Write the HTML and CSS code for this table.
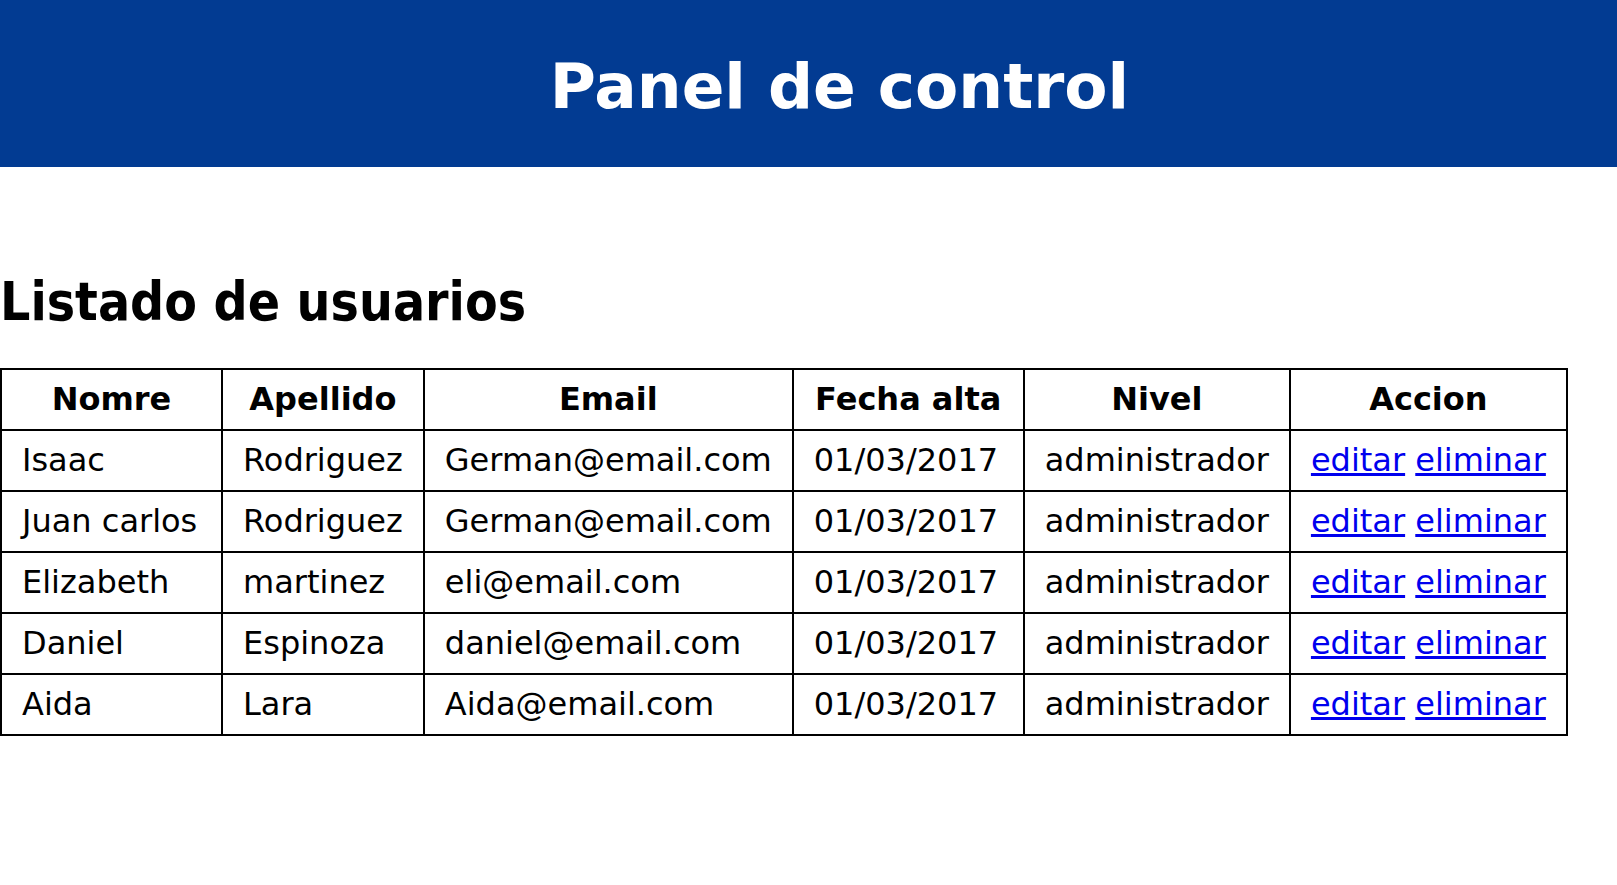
FILE: index.html
```html
<!DOCTYPE html>
<html lang="es">
<head>
<meta charset="utf-8">
<title>Panel de control</title>
<link rel="stylesheet" href="styles.css">
</head>
<body>
<header class="top-bar">
  <h1 class="top-title">Panel de control</h1>
</header>
<main class="content">
  <h2 class="section-title">Listado de usuarios</h2>
  <table class="users">
    <colgroup>
      <col class="c-nombre">
      <col class="c-apellido">
      <col class="c-email">
      <col class="c-fecha">
      <col class="c-nivel">
      <col class="c-accion">
    </colgroup>
    <thead>
      <tr><th>Nomre</th><th>Apellido</th><th>Email</th><th>Fecha alta</th><th>Nivel</th><th>Accion</th></tr>
    </thead>
    <tbody>
      <tr><td>Isaac</td><td>Rodriguez</td><td>German@email.com</td><td>01/03/2017</td><td>administrador</td><td><a href="#">editar</a> <a href="#">eliminar</a></td></tr>
      <tr><td>Juan carlos</td><td>Rodriguez</td><td>German@email.com</td><td>01/03/2017</td><td>administrador</td><td><a href="#">editar</a> <a href="#">eliminar</a></td></tr>
      <tr><td>Elizabeth</td><td>martinez</td><td>eli@email.com</td><td>01/03/2017</td><td>administrador</td><td><a href="#">editar</a> <a href="#">eliminar</a></td></tr>
      <tr><td>Daniel</td><td>Espinoza</td><td>daniel@email.com</td><td>01/03/2017</td><td>administrador</td><td><a href="#">editar</a> <a href="#">eliminar</a></td></tr>
      <tr><td>Aida</td><td>Lara</td><td>Aida@email.com</td><td>01/03/2017</td><td>administrador</td><td><a href="#">editar</a> <a href="#">eliminar</a></td></tr>
    </tbody>
  </table>
</main>
</body>
</html>
```
FILE: styles.css
```css
html, body {
  margin: 0;
  padding: 0;
  background: #ffffff;
}
body {
  font-family: "DejaVu Sans", Verdana, sans-serif;
  font-size: 32px;
  color: #000000;
}
.top-bar {
  background: #023b92;
  padding: 49px 0 43px 62px;
}
.top-title {
  margin: 0;
  color: #ffffff;
  font-size: 63px;
  line-height: 75px;
  font-weight: bold;
  text-align: center;
}
.section-title {
  margin: 105px 0 36px;
  font-family: "DejaVu Sans Condensed", "DejaVu Sans", Verdana, sans-serif;
  font-stretch: condensed;
  font-size: 53px;
  line-height: 60px;
  font-weight: bold;
}
.users {
  border-collapse: collapse;
  border: 2px solid #000;
}
.c-nombre { width: 221px; }
.c-apellido { width: 199px; }
.c-email { width: 366px; }
.c-fecha { width: 231px; }
.c-nivel { width: 262px; }
.c-accion { width: 274px; }
.users th,
.users td {
  border: 2px solid #000;
  padding: 10px 20px;
  line-height: 39px;
  white-space: nowrap;
}
.users th {
  font-weight: bold;
  text-align: center;
}
.users td {
  text-align: left;
}
.users a {
  color: #0000ee;
  text-decoration: underline;
}
```
